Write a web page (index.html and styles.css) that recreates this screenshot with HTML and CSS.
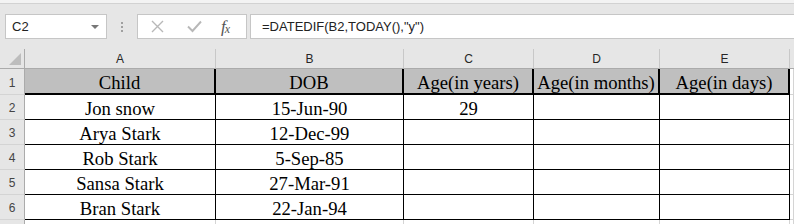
FILE: index.html
```html
<!DOCTYPE html>
<html lang="en">

<head>
    <meta charset="UTF-8">
    <meta name="viewport" content="width=device-width, initial-scale=1.0">
    <title>Age calculator</title>
    <link rel="stylesheet" href="styles.css">
</head>

<body>
    <div class="app">
        <div class="ribbon-edge"></div>
        <div class="formula-bar">
            <div class="name-box">
                <span>C2</span>
                <span class="caret"></span>
            </div>
            <div class="grip">
                <i></i><i></i><i></i>
            </div>
            <div class="fn-box">
                <svg class="cancel" width="13" height="13" viewBox="0 0 13 13">
                    <path d="M1 1 L12 12 M12 1 L1 12" stroke="#b8b8b8" stroke-width="1.4" fill="none" />
                </svg>
                <svg class="enter" width="15" height="13" viewBox="0 0 15 13">
                    <path d="M1 6.5 L5.5 11 L14 1.5" stroke="#b8b8b8" stroke-width="1.9" fill="none" />
                </svg>
                <span class="fx">f<sub>x</sub></span>
            </div>
            <div class="formula">=DATEDIF(B2,TODAY(),"y")</div>
        </div>

        <div class="sheet">
            <div class="corner"><span class="tri"></span></div>
            <div class="col-head">A</div>
            <div class="col-head">B</div>
            <div class="col-head">C</div>
            <div class="col-head">D</div>
            <div class="col-head">E</div>
            <div class="col-head rest"></div>

            <div class="row-head">1</div>
            <div class="cell th">Child</div>
            <div class="cell th">DOB</div>
            <div class="cell th">Age(in years)</div>
            <div class="cell th">Age(in months)</div>
            <div class="cell th">Age(in days)</div>
            <div class="cell blank"></div>

            <div class="row-head">2</div>
            <div class="cell">Jon snow</div>
            <div class="cell">15-Jun-90</div>
            <div class="cell">29</div>
            <div class="cell"></div>
            <div class="cell"></div>
            <div class="cell blank"></div>

            <div class="row-head">3</div>
            <div class="cell">Arya Stark</div>
            <div class="cell">12-Dec-99</div>
            <div class="cell"></div>
            <div class="cell"></div>
            <div class="cell"></div>
            <div class="cell blank"></div>

            <div class="row-head">4</div>
            <div class="cell">Rob Stark</div>
            <div class="cell">5-Sep-85</div>
            <div class="cell"></div>
            <div class="cell"></div>
            <div class="cell"></div>
            <div class="cell blank"></div>

            <div class="row-head">5</div>
            <div class="cell">Sansa Stark</div>
            <div class="cell">27-Mar-91</div>
            <div class="cell"></div>
            <div class="cell"></div>
            <div class="cell"></div>
            <div class="cell blank"></div>

            <div class="row-head">6</div>
            <div class="cell">Bran Stark</div>
            <div class="cell">22-Jan-94</div>
            <div class="cell"></div>
            <div class="cell"></div>
            <div class="cell"></div>
            <div class="cell blank"></div>

            <!-- row 7 only peeks in at the bottom edge -->
            <div class="row-head"></div>
            <div class="cell empty"></div>
            <div class="cell empty"></div>
            <div class="cell empty"></div>
            <div class="cell empty"></div>
            <div class="cell empty"></div>
            <div class="cell empty"></div>
        </div>
    </div>
</body>

</html>
```

FILE: styles.css
```css
* {
    box-sizing: border-box;
}

body {
    margin: 0;
    width: 794px;
    height: 224px;
    overflow: hidden;
    background-color: #e6e6e6;
    font-family: "Liberation Sans", Arial, sans-serif;
}

.ribbon-edge {
    height: 14px;
    border-top: 3px solid #f3f3f3;
}

.ribbon-edge::before {
    content: "";
    display: block;
    border-top: 1px solid #d2d2d2;
}

.formula-bar {
    display: flex;
    align-items: stretch;
    height: 25px;
    padding-left: 5px;
}

.name-box {
    width: 102px;
    background-color: #fff;
    border: 1px solid #c6c6c6;
    display: flex;
    align-items: center;
    justify-content: space-between;
    padding: 0 7px 0 6px;
    font-size: 13px;
    color: #222;
}

.caret {
    width: 0;
    height: 0;
    border-left: 4px solid transparent;
    border-right: 4px solid transparent;
    border-top: 4px solid #777;
}

.grip {
    width: 30px;
    display: flex;
    flex-direction: column;
    align-items: center;
    justify-content: center;
    gap: 2px;
}

.grip i {
    width: 2px;
    height: 2px;
    background-color: #a0a0a0;
}

.fn-box {
    width: 110px;
    background-color: #fff;
    border: 1px solid #c6c6c6;
    display: flex;
    align-items: center;
    padding-left: 13px;
}

.enter {
    margin-left: 23px;
}

.fx {
    margin-left: 19px;
    font-family: "Liberation Serif", serif;
    font-style: italic;
    font-size: 17px;
    color: #555;
    line-height: 1;
}

.fx sub {
    font-size: 12px;
    vertical-align: -1px;
    margin-left: -1px;
}

.formula {
    flex: 1;
    margin-left: 3px;
    background-color: #fff;
    border: 1px solid #c6c6c6;
    border-right: none;
    display: flex;
    align-items: center;
    padding-left: 11px;
    font-size: 13px;
    color: #222;
}

.sheet {
    margin-top: 10px;
    display: grid;
    grid-template-columns: 25px 191px 188px 130px 126px 130px 4px;
    grid-template-rows: 20px 26px 25px 25px 25px 25px 25px 25px;
}

.corner {
    border-right: 1px solid #ababab;
    border-bottom: 1px solid #ababab;
    position: relative;
}

.tri {
    position: absolute;
    right: 3px;
    bottom: 3px;
    width: 0;
    height: 0;
    border-left: 12px solid transparent;
    border-bottom: 12px solid #bdbdbd;
}

.col-head {
    border-right: 1px solid #c8c8c8;
    border-bottom: 1px solid #ababab;
    display: flex;
    align-items: center;
    justify-content: center;
    font-size: 12px;
    color: #262626;
}

.col-head.rest {
    border-right: none;
}

.row-head {
    border-right: 1px solid #ababab;
    border-bottom: 1px solid #d4d4d4;
    display: flex;
    align-items: center;
    justify-content: center;
    font-size: 12px;
    color: #444;
    padding-top: 2px;
}

.cell {
    background-color: #fff;
    border-right: 1px solid #000;
    border-bottom: 1px solid #000;
    display: flex;
    align-items: center;
    justify-content: center;
    font-family: "Liberation Serif", "Times New Roman", serif;
    font-size: 14pt;
    color: #000;
    padding-top: 3px;
    white-space: nowrap;
}

.cell.th {
    background-color: #bfbfbf;
    border-right-width: 2px;
    border-bottom-width: 2px;
}

.cell.blank,
.cell.empty {
    border-right: 1px solid #d4d4d4;
    border-bottom: 1px solid #d4d4d4;
}
```
